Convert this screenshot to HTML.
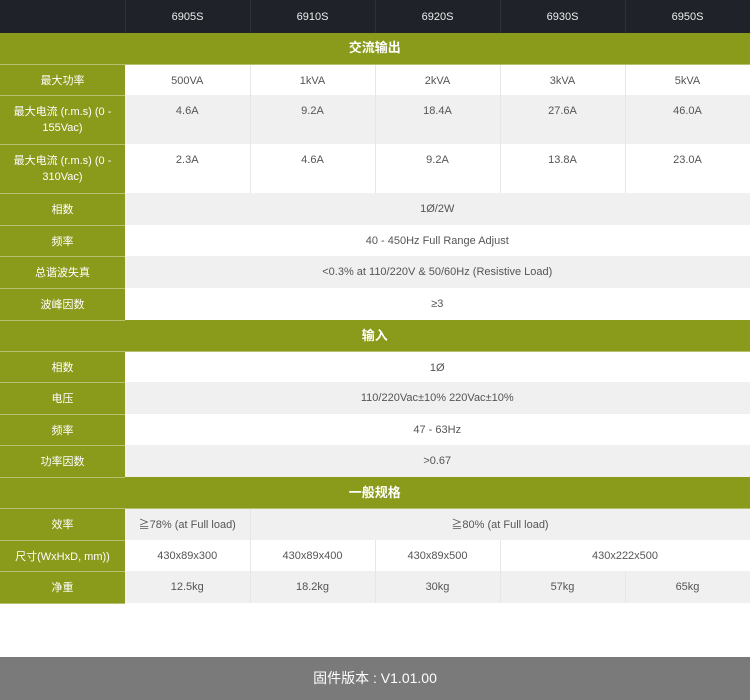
<!DOCTYPE html>
<html><head><meta charset="utf-8"><style>
*{margin:0;padding:0;box-sizing:border-box}
body{width:750px;height:700px;background:#fff;font-family:"Liberation Sans","Noto Sans CJK SC",sans-serif;position:relative;overflow:hidden}
table{border-collapse:collapse;table-layout:fixed;width:750px;position:absolute;left:0;top:0}
td{font-size:11px;color:#555;text-align:center;vertical-align:top;padding-top:8px;line-height:16px;border-right:1px solid #e6e6e6}
td.l{background:#8a9a1b;color:#fff;border-right:none;border-bottom:1px solid #b5c070;padding:8px 6px 0}
tr.h td{background:#1f2229;color:#eee;height:33px;padding-top:9px;border-right:1px solid #2c3038}
tr.s td{background:#8a9a1b;color:#fff;font-weight:bold;font-size:13px;height:31px;padding-top:7px;border-bottom:1px solid #b5c070}
tr.g td:not(.l){background:#f0f0f0}
tr.w td:not(.l){background:#fff}
.footer{position:absolute;left:0;top:657px;width:750px;height:43px;background:#7a7a7a;color:#fff;font-size:14px;text-align:center;line-height:43px;font-family:"Liberation Sans","Noto Sans CJK SC",sans-serif}
</style></head><body>
<table>
<colgroup><col style="width:125px"><col style="width:125px"><col style="width:125px"><col style="width:125px"><col style="width:125px"><col style="width:125px"></colgroup>
<tr class="h"><td></td><td>6905S</td><td>6910S</td><td>6920S</td><td>6930S</td><td>6950S</td></tr>
<tr class="s"><td colspan="6">交流输出</td></tr>
<tr class="w" style="height:31px"><td class="l">最大功率</td><td>500VA</td><td>1kVA</td><td>2kVA</td><td>3kVA</td><td>5kVA</td></tr>
<tr class="g" style="height:49px"><td class="l">最大电流 (r.m.s) (0 - 155Vac)</td><td>4.6A</td><td>9.2A</td><td>18.4A</td><td>27.6A</td><td>46.0A</td></tr>
<tr class="w" style="height:49px"><td class="l">最大电流 (r.m.s) (0 - 310Vac)</td><td>2.3A</td><td>4.6A</td><td>9.2A</td><td>13.8A</td><td>23.0A</td></tr>
<tr class="g" style="height:32px"><td class="l">相数</td><td colspan="5">1Ø/2W</td></tr>
<tr class="w" style="height:31px"><td class="l">频率</td><td colspan="5">40 - 450Hz Full Range Adjust</td></tr>
<tr class="g" style="height:32px"><td class="l">总谐波失真</td><td colspan="5">&lt;0.3% at 110/220V &amp; 50/60Hz (Resistive Load)</td></tr>
<tr class="w" style="height:32px"><td class="l">波峰因数</td><td colspan="5">≥3</td></tr>
<tr class="s"><td colspan="6">输入</td></tr>
<tr class="w" style="height:31px"><td class="l">相数</td><td colspan="5">1Ø</td></tr>
<tr class="g" style="height:32px"><td class="l">电压</td><td colspan="5">110/220Vac±10% 220Vac±10%</td></tr>
<tr class="w" style="height:31px"><td class="l">频率</td><td colspan="5">47 - 63Hz</td></tr>
<tr class="g" style="height:32px"><td class="l">功率因数</td><td colspan="5">&gt;0.67</td></tr>
<tr class="s"><td colspan="6">一般规格</td></tr>
<tr class="g" style="height:32px"><td class="l">效率</td><td>≧78% (at Full load)</td><td colspan="4">≧80% (at Full load)</td></tr>
<tr class="w" style="height:31px"><td class="l">尺寸(WxHxD, mm))</td><td>430x89x300</td><td>430x89x400</td><td>430x89x500</td><td colspan="2">430x222x500</td></tr>
<tr class="g" style="height:32px"><td class="l">净重</td><td>12.5kg</td><td>18.2kg</td><td>30kg</td><td>57kg</td><td>65kg</td></tr>
</table>
<div class="footer">固件版本 : V1.01.00</div>
</body></html>
